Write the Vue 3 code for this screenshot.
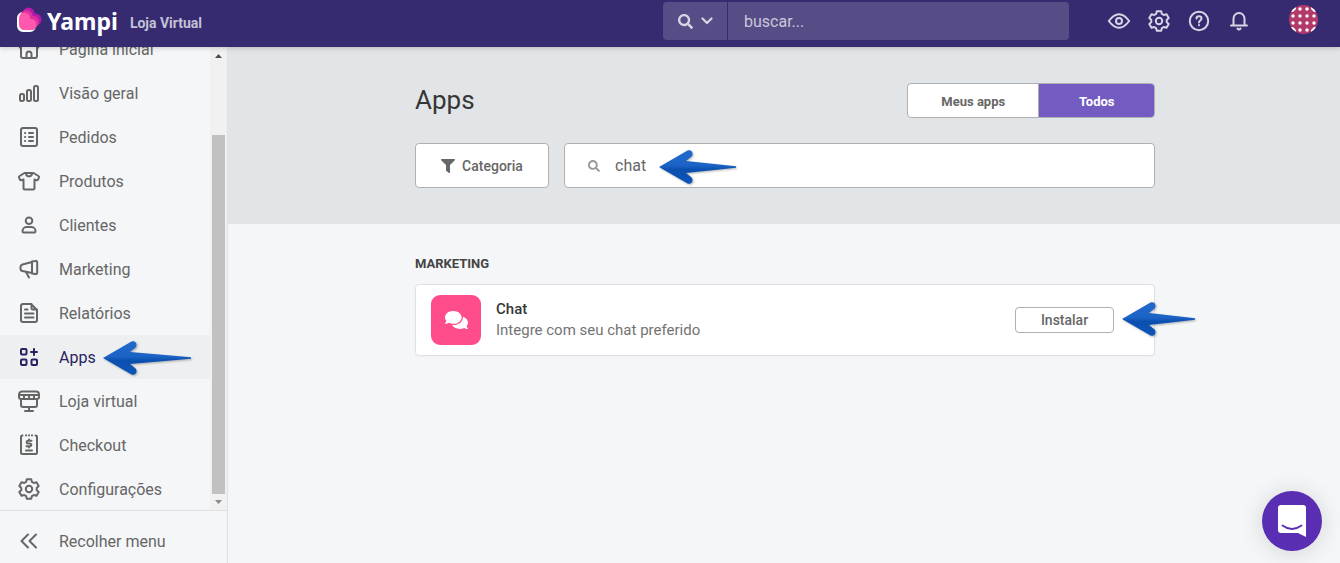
<script setup>
import { ref } from 'vue'

const menu = [
  { id: 'home', label: 'Página inicial' },
  { id: 'chart', label: 'Visão geral' },
  { id: 'orders', label: 'Pedidos' },
  { id: 'shirt', label: 'Produtos' },
  { id: 'user', label: 'Clientes' },
  { id: 'megaphone', label: 'Marketing' },
  { id: 'report', label: 'Relatórios' },
  { id: 'apps', label: 'Apps', active: true },
  { id: 'store', label: 'Loja virtual' },
  { id: 'checkout', label: 'Checkout' },
  { id: 'gear', label: 'Configurações' },
]
const gear =
  'M9.8 2.2h4.4l.7 2.7 1.9 1.1 2.7-.8 2.2 3.8-2 1.9v2.2l2 1.9-2.2 3.8-2.7-.8-1.9 1.1-.7 2.7H9.8l-.7-2.7L7.2 18l-2.7.8L2.3 15l2-1.9v-2.2l-2-1.9 2.2-3.8 2.7.8 1.9-1.1z'
const icons = {
  home: 'M4 10.5H2.8L12 2.5l9.2 8H20V19a2 2 0 0 1-2 2H6a2 2 0 0 1-2-2zM9.5 21v-4a2.5 2.5 0 0 1 5 0v4',
  chart: 'M4.5 13h1A1.5 1.5 0 0 1 7 14.500v4A1.500 1.500 0 0 1 5.500 20h-1A1.500 1.500 0 0 1 3 18.500v-4A1.500 1.500 0 0 1 4.500 13zM11.500 9h1a1.500 1.500 0 0 1 1.500 1.500v8a1.500 1.500 0 0 1-1.500 1.500h-1a1.500 1.500 0 0 1-1.500-1.500v-8A1.500 1.500 0 0 1 11.500 9zM18.500 5h1A1.500 1.500 0 0 1 21 6.500v12a1.500 1.500 0 0 1-1.500 1.500h-1a1.500 1.500 0 0 1-1.500-1.500v-12A1.500 1.500 0 0 1 18.500 5z',
  orders: 'M6 3h12a2 2 0 0 1 2 2v14a2 2 0 0 1-2 2H6a2 2 0 0 1-2-2V5a2 2 0 0 1 2-2zM8 8h.2M12 8h4M8 12h.2M12 12h4M8 16h.2M12 16h4',
  shirt: 'M8.500 4H7.500L2.600 7c-.6.4-.8 1.200-.5 1.800L3 10.500c.3.600 1 .8 1.600.600L6.500 10.500V19a1.500 1.500 0 0 0 1.500 1.500h8a1.500 1.500 0 0 0 1.500-1.500v-8.500l1.900.6c.6.200 1.300 0 1.600-.600l.9-1.700c.3-.600.1-1.400-.5-1.800L16.500 4h-8zM9 4c0 4.500 6 4.500 6 0',
  user: 'M12 4.500a3.300 3.300 0 1 1 0 6.600a3.300 3.300 0 0 1 0-6.600zM9.500 14h5c2.500 0 4 2 4 4.300c0 .7-.5 1.200-1.200 1.200H6.700c-.7 0-1.200-.5-1.200-1.200C5.500 16 7 14 9.500 14z',
  megaphone: 'M15 5L5.500 7.500C4 8 3.500 8.500 3.500 10v1.500c0 1.500.5 2.300 2 2.500L15 16zM15 4.500l3.500-.6c1-.2 1.700.4 1.700 1.400v10.400c0 1-.7 1.600-1.700 1.400l-3.500-.6zM9 15l3 5.500',
  report: 'M14 3H6a2 2 0 0 0-2 2v14a2 2 0 0 0 2 2h12a2 2 0 0 0 2-2V9zM14.500 3v4A1.500 1.500 0 0 0 16 8.500h4M14 3l6 6M8 8.500h2.500M8 12.500h8.500M8 16.500h8.500',
  apps: 'M5 4h3.500A1 1 0 0 1 9.500 5v3.500a1 1 0 0 1-1 1H5a1 1 0 0 1-1-1V5a1 1 0 0 1 1-1zM5 14.500h3.500a1 1 0 0 1 1 1V19a1 1 0 0 1-1 1H5a1 1 0 0 1-1-1v-3.500a1 1 0 0 1 1-1zM15.500 14.500H19a1 1 0 0 1 1 1V19a1 1 0 0 1-1 1h-3.500a1 1 0 0 1-1-1v-3.500a1 1 0 0 1 1-1zM17 4v6M14 7h6',
  store: 'M5 2.500h14a3 3 0 0 1 3 3V8a2 2 0 0 1-2 2H4a2 2 0 0 1-2-2V5.500a3 3 0 0 1 3-3zM2.500 6h19M7 6.500v3M12 6.500v3M17 6.500v3M4 10v6a2 2 0 0 0 2 2h12a2 2 0 0 0 2-2v-6M12 18v4M8 22h8',
  checkout: 'M5.500 2.500A1.500 1.500 0 0 0 4 4v15.500A1.500 1.500 0 0 0 5.500 21h13a1.500 1.500 0 0 0 1.500-1.500V4A1.500 1.500 0 0 0 18.500 2.500M9 2.300v.3M12 2.300v.3M15 2.300v.3M9 17.500h6M14.500 7.800h-3.500a1.300 1.300 0 0 0 0 2.700h2a1.300 1.300 0 0 1 0 2.700H9.500M12 6.500v1M12 13.500v1',
  gear: gear + 'M12 8.800a3.200 3.200 0 1 1 0 6.400a3.200 3.200 0 0 1 0-6.400z',
}
const magnifier =
  'M505 442.700L405.300 343c-4.500-4.500-10.600-7-17-7H372c27.600-35.300 44-79.700 44-128C416 93.100 322.900 0 208 0S0 93.100 0 208s93.100 208 208 208c48.300 0 92.700-16.400 128-44v16.300c0 6.400 2.500 12.500 7 17l99.700 99.700c9.400 9.400 24.600 9.400 33.900 0l28.300-28.300c9.400-9.400 9.400-24.600.1-34zM208 336c-70.700 0-128-57.200-128-128 0-70.700 57.200-128 128-128 70.700 0 128 57.200 128 128 0 70.700-57.200 128-128 128z'
const pointer = (w) =>
  `M0 17L28.500.6C32.500-1.200 35.500 4 32 7L27 11L${w} 16.300V17.700L27 23L32 27C35.500 30 32.500 35.200 28.500 33.400Z`
const dots = [0, 1, 2, 3].flatMap((r) => [0, 1, 2, 3].map((c) => [4 + c * 7, 4 + r * 7]))
const query = ref('chat')
const globalQuery = ref('')
</script>

<template>
  <div class="shell">
    <svg class="defs" width="0" height="0" aria-hidden="true">
      <linearGradient id="blue" x1="0" y1="0" x2="0" y2="1">
        <stop offset="0" stop-color="#2169cb" />
        <stop offset="0.45" stop-color="#1c63c6" />
        <stop offset="0.58" stop-color="#0b50b0" />
        <stop offset="1" stop-color="#0d55b9" />
      </linearGradient>
    </svg>

    <header class="topbar">
      <a class="brand" href="#">
        <svg class="logo" width="26" height="28" viewBox="0 0 26 28" fill="none" stroke-linecap="round" stroke-linejoin="round" aria-hidden="true">
          <path d="M7 11V19H14" stroke="#fff" stroke-width="12" />
          <path d="M12.500 6.500V12.500H19.500M12.500 12.500L15 17" stroke="#b31bab" stroke-width="12" />
          <path d="M10.500 9V15H17" stroke="#e3309f" stroke-width="12" />
          <path d="M8.500 11V17.500H15" stroke="#ff58ae" stroke-width="11" />
        </svg>
        <span class="name">Yampi</span>
        <span class="product">Loja Virtual</span>
      </a>
      <form class="global" @submit.prevent>
        <button class="scope" type="button" aria-label="Tipo de busca">
          <svg width="15" height="15" viewBox="0 0 512 512"><path :d="magnifier" fill="currentColor" /></svg>
          <svg width="12" height="8" viewBox="0 0 12 8"><path d="M1.500 1.500L6 6l4.500-4.500" fill="none" stroke="currentColor" stroke-width="2.200" stroke-linecap="round" stroke-linejoin="round" /></svg>
        </button>
        <input v-model="globalQuery" type="text" placeholder="buscar..." aria-label="Buscar" />
      </form>
      <div class="actions">
        <button type="button" aria-label="Visualizar">
          <svg class="line" width="24" height="24" viewBox="0 0 24 24"><path d="M1.800 12Q12-1.500 22.200 12Q12 25.500 1.800 12z" /><circle cx="12" cy="12" r="3" /></svg>
        </button>
        <button type="button" aria-label="Ajustes">
          <svg class="line" width="24" height="24" viewBox="0 0 24 24"><path :d="icons.gear" /></svg>
        </button>
        <button type="button" aria-label="Ajuda">
          <svg class="line" width="24" height="24" viewBox="0 0 24 24"><circle cx="12" cy="12" r="9.200" /><path d="M9.500 9.500c0-3 5-3 5 0c0 2-2.500 2-2.500 4M12 16v.3" /></svg>
        </button>
        <button type="button" aria-label="Notificações">
          <svg class="line" width="24" height="24" viewBox="0 0 24 24"><path d="M4 16.500h16M6.500 16V9.500a5.500 5.500 0 0 1 11 0V16M10.500 19.500c1 1.200 2 1.200 3 0" /></svg>
        </button>
        <button class="avatar" type="button" aria-label="Conta">
          <svg width="29" height="29" viewBox="0 0 29 29">
            <rect width="29" height="29" fill="#b23a6b" />
            <path d="M0 0h7v4L4 7H0zM22 0h7v7h-4l-3-3zM0 22h4l3 3v4H0zM25 22h4v7h-7v-4z" fill="#fff" />
            <circle v-for="(d, i) in dots" :key="i" :cx="d[0]" :cy="d[1]" r="1.700" fill="#fff" />
          </svg>
        </button>
      </div>
    </header>

    <div class="body">
      <aside class="sidebar">
        <div class="scroller">
          <nav class="menu" aria-label="Menu principal">
            <a v-for="item in menu" :key="item.id" href="#" class="item" :class="{ active: item.active }">
              <svg class="line" width="24" height="24" viewBox="0 0 24 24"><path :d="icons[item.id]" /></svg>
              <span class="label">
                {{ item.label }}
                <svg v-if="item.active" class="pointer" width="88" height="35"><path :d="pointer(88)" fill="url(#blue)" /></svg>
              </span>
            </a>
          </nav>
          <div class="bar" aria-hidden="true">
            <svg width="7" height="4"><path d="M3.500 0L7 4H0z" fill="#505050" /></svg>
            <div class="track"><div class="thumb"></div></div>
            <svg width="7" height="4"><path d="M0 0h7L3.500 4z" fill="#8b8b8b" /></svg>
          </div>
        </div>
        <button class="collapse" type="button">
          <svg class="line" width="24" height="24" viewBox="0 0 24 24"><path d="M11 5.500L4.500 12l6.500 6.500M19 5.500L12.500 12l6.500 6.500" /></svg>
          Recolher menu
        </button>
      </aside>

      <main class="main">
        <section class="hero">
          <div class="wrap">
            <div class="heading">
              <h1>Apps</h1>
              <div class="tabs">
                <button type="button">Meus apps</button>
                <button type="button" class="on">Todos</button>
              </div>
            </div>
            <div class="filters">
              <button class="category" type="button">
                <svg width="14" height="14" viewBox="0 0 14 14"><path d="M.7 0h12.600c.6 0 .9.800.5 1.200L9 6v7.400c0 .5-.6.800-1 .5l-2.600-1.800A1 1 0 0 1 5 11.300V6L.2 1.200C-.2.800.1 0 .7 0z" fill="currentColor" /></svg>
                Categoria
              </button>
              <label class="search">
                <svg width="12" height="12" viewBox="0 0 512 512"><path :d="magnifier" fill="#999" /></svg>
                <input v-model="query" type="text" aria-label="Buscar apps" />
                <svg class="pointer" width="77" height="35"><path :d="pointer(77)" fill="url(#blue)" /></svg>
              </label>
            </div>
          </div>
        </section>

        <section class="results">
          <div class="wrap">
            <h2>MARKETING</h2>
            <article class="card">
              <div class="badge">
                <svg width="23" height="18" viewBox="0 0 576 448"><path fill="#fff" d="M416 160c0-88.400-93.100-160-208-160S0 71.600 0 160c0 34.300 14.100 65.900 38 92-13.400 30.200-35.500 54.200-35.800 54.500-2.200 2.300-2.800 5.700-1.500 8.700S4.800 320 8 320c36.600 0 66.900-12.300 88.700-25 32.200 15.700 70.300 25 111.300 25 114.900 0 208-71.600 208-160zm122 220c23.900-26 38-57.700 38-92 0-66.900-53.500-124.200-129.300-148.100.9 6.600 1.300 13.300 1.300 20.100 0 105.900-107.700 192-240 192-10.800 0-21.300-.8-31.700-1.900C207.800 407.700 281.800 448 368 448c41 0 79.100-9.200 111.300-25 21.800 12.700 52.100 25 88.700 25 3.200 0 6.100-1.900 7.300-4.800 1.300-2.900.7-6.300-1.500-8.700-.3-.3-22.400-24.200-35.800-54.500z" /></svg>
              </div>
              <div class="info">
                <h3>Chat</h3>
                <p>Integre com seu chat preferido</p>
              </div>
              <button class="install" type="button">Instalar</button>
              <svg class="pointer" width="73" height="35"><path :d="pointer(73)" fill="url(#blue)" /></svg>
            </article>
          </div>
        </section>
      </main>
    </div>

    <button class="messenger" type="button" aria-label="Abrir atendimento">
      <svg width="28" height="32" viewBox="0 0 28 32"><path d="M3 0h22a3 3 0 0 1 3 3v29l-8-4H3a3 3 0 0 1-3-3V3a3 3 0 0 1 3-3z" fill="#fff" /><path d="M4.500 20.500Q14 27.500 23.500 20.500" fill="none" stroke="#592eb3" stroke-width="1.800" stroke-linecap="round" /></svg>
    </button>
  </div>
</template>

<style>
body {
  background: #f5f6f8;
}
</style>

<style scoped>
.shell {
  height: 100vh;
  display: flex;
  flex-direction: column;
  font-family: Roboto, "Liberation Sans", sans-serif;
  font-size: 16px;
  color: #666;
}
.shell *,
.shell *::before {
  box-sizing: border-box;
}
button,
input {
  font: inherit;
  color: inherit;
  margin: 0;
  padding: 0;
  border: 0;
  background: none;
  outline: 0;
}
button {
  cursor: pointer;
}
a {
  color: inherit;
  text-decoration: none;
}
svg {
  display: block;
  flex: none;
}
h1,
h2,
h3,
p {
  margin: 0;
}
.defs {
  position: absolute;
}
.line {
  fill: none;
  stroke: currentColor;
  stroke-width: 2;
  stroke-linecap: round;
  stroke-linejoin: round;
}
.pointer {
  position: absolute;
  z-index: 2;
  overflow: visible;
  filter: drop-shadow(1px 1px 1px rgba(0, 0, 0, 0.3));
}

.topbar {
  position: relative;
  z-index: 3;
  flex: none;
  display: flex;
  align-items: center;
  height: 47px;
  padding: 0 22px 5px 16px;
  background: #362b71;
  box-shadow: 0 1px 5px rgba(0, 0, 0, 0.2);
  color: #d7d5e3;
}
.brand {
  display: flex;
  align-items: center;
  margin-right: auto;
}
.name {
  margin-left: 5px;
  font: 700 23px/32px "Noto Sans", sans-serif;
  color: #fff;
}
.product {
  margin-left: 12px;
  padding-top: 3px;
  font-size: 14px;
  font-weight: 700;
  color: #c5c1d7;
}
.global {
  display: flex;
  gap: 1px;
  width: 406px;
  height: 38px;
  margin-right: 38px;
}
.scope {
  display: flex;
  align-items: center;
  justify-content: center;
  gap: 8px;
  width: 64px;
  border-radius: 4px 0 0 4px;
  background: #564c86;
}
.global input {
  flex: 1;
  min-width: 0;
  padding: 0 16px;
  border-radius: 0 4px 4px 0;
  background: #564c86;
}
.global input::placeholder {
  color: #cbc8da;
  opacity: 1;
}
.actions {
  display: flex;
  align-items: center;
  gap: 16px;
}
.actions .avatar {
  margin: 0 0 3px 22px;
  border-radius: 50%;
  overflow: hidden;
}

.body {
  flex: 1;
  min-height: 0;
  display: flex;
}
.sidebar {
  flex: none;
  display: flex;
  flex-direction: column;
  width: 228px;
  border-right: 1px solid #e0e1e3;
}
.scroller {
  flex: 1;
  min-height: 0;
  display: flex;
}
.menu {
  flex: 1;
  display: flex;
  flex-direction: column;
  justify-content: flex-end;
  overflow: hidden;
}
.item {
  flex: none;
  display: flex;
  align-items: center;
  gap: 18px;
  height: 44px;
  padding-left: 17px;
}
.item.active {
  background: #eeeff1;
  color: #28235f;
}
.label {
  position: relative;
}
.label .pointer {
  left: 44px;
  top: -7px;
}
.bar {
  display: flex;
  flex-direction: column;
  align-items: center;
  gap: 6px;
  width: 17px;
  padding: 7px 0;
  background: #f1f1f1;
}
.track {
  flex: 1;
  display: flex;
  align-items: flex-end;
  width: 13px;
}
.thumb {
  width: 100%;
  height: 83.5%;
  background: #c1c1c1;
}
.collapse {
  position: relative;
  flex: none;
  display: flex;
  align-items: center;
  gap: 18px;
  height: 53px;
  margin-top: -1px;
  padding: 8px 0 0 17px;
  border-top: 1px solid #e0e1e3;
  background: #f5f6f8;
}

.main {
  flex: 1;
  min-width: 0;
}
.hero,
.results {
  padding-left: 2px;
}
.hero {
  padding-top: 36px;
  padding-bottom: 36px;
  background: #e2e5e8;
}
.wrap {
  max-width: 740px;
  margin: 0 auto;
}
.heading {
  display: flex;
  align-items: center;
  justify-content: space-between;
  margin-bottom: 25px;
}
h1 {
  font-size: 26px;
  line-height: 35px;
  font-weight: 400;
  color: #363636;
}
.tabs {
  display: flex;
  width: 248px;
  height: 35px;
  border: 1px solid #b0b0b0;
  border-radius: 4px;
  overflow: hidden;
  background: #fff;
  font-size: 13px;
  font-weight: 700;
}
.tabs button {
  flex: 131;
  padding-top: 1px;
}
.tabs .on {
  flex: 115;
  border-left: 1px solid #b0b0b0;
  background: #735bc1;
  color: #fff;
}
.filters {
  display: flex;
  gap: 15px;
}
.category,
.search {
  height: 45px;
  border: 1px solid #b0b0b0;
  border-radius: 4px;
  background: #fff;
}
.category {
  display: flex;
  align-items: center;
  justify-content: center;
  gap: 7px;
  width: 134px;
  font-size: 14px;
  font-weight: 500;
}
.search {
  position: relative;
  flex: 1;
  display: flex;
  align-items: center;
  gap: 15px;
  padding: 0 23px;
}
.search input {
  flex: 1;
  min-width: 0;
}
.search .pointer {
  left: 94px;
  top: 6px;
}

.results {
  padding-top: 32px;
}
h2 {
  margin-bottom: 12px;
  font-size: 13px;
  line-height: 16px;
  font-weight: 700;
  color: #444;
}
.card {
  position: relative;
  display: flex;
  align-items: center;
  height: 72px;
  padding: 0 40px 0 15px;
  border: 1px solid #e0e1e4;
  border-radius: 4px;
  background: #fff;
  box-shadow: 0 1px 3px rgba(0, 0, 0, 0.03);
}
.badge {
  display: grid;
  place-items: center;
  width: 50px;
  height: 50px;
  margin-right: 15px;
  border-radius: 9px;
  background: #ff4d8b;
}
.info {
  flex: 1;
  line-height: 21px;
}
h3 {
  font-size: 15px;
  font-weight: 500;
  color: #363636;
}
p {
  font-size: 15px;
  color: #737373;
}
.install {
  width: 99px;
  height: 26px;
  border: 1px solid #b0b0b0;
  border-radius: 4px;
  font-size: 14px;
  font-weight: 500;
}
.card .pointer {
  right: -41px;
  top: 17px;
}
.messenger {
  position: fixed;
  right: 18px;
  bottom: 12px;
  z-index: 4;
  display: grid;
  place-items: center;
  width: 60px;
  height: 60px;
  border-radius: 50%;
  background: #592eb3;
  box-shadow: 0 2px 24px rgba(0, 0, 0, 0.14);
}
</style>
